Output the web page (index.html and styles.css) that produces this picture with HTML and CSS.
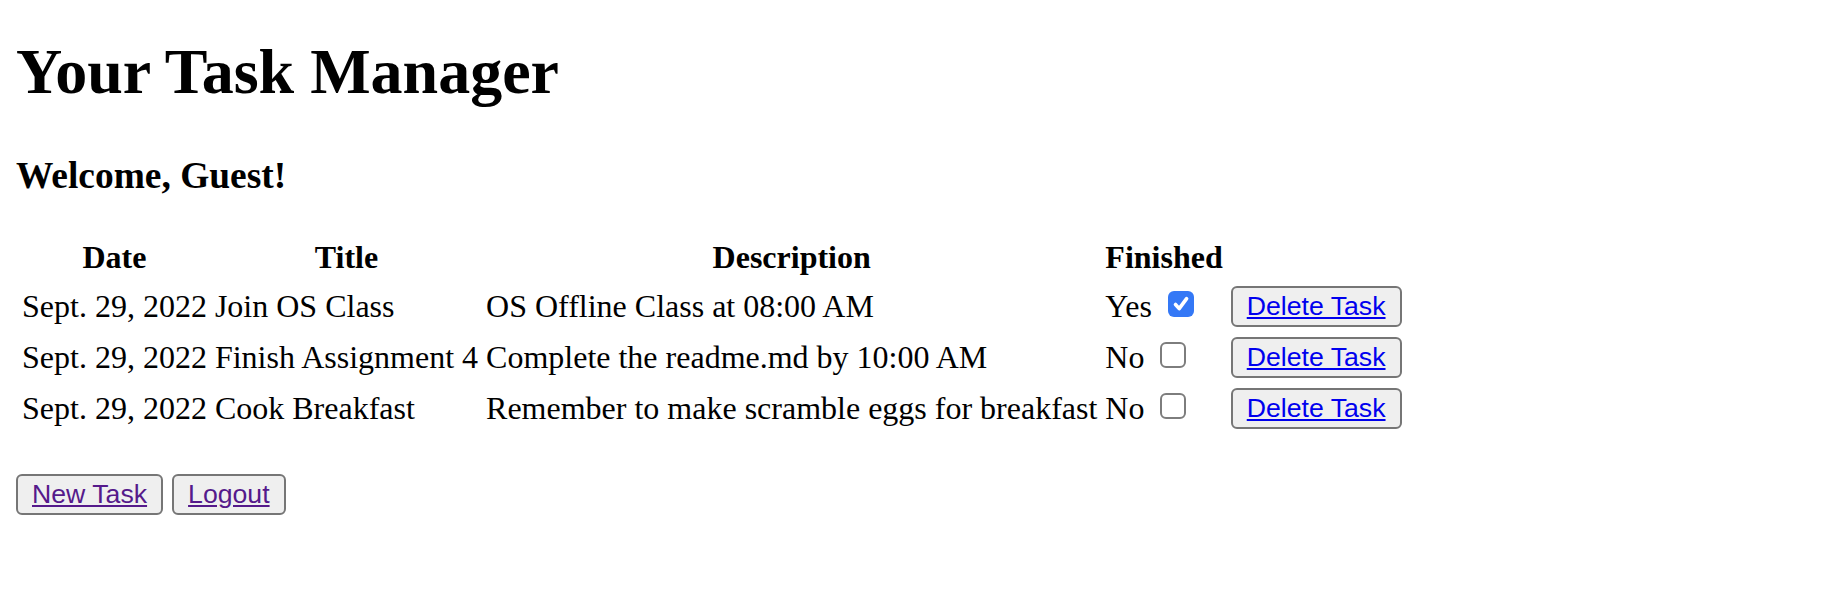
FILE: index.html
```html
<!DOCTYPE html>
<html lang="en">
<head>
<meta charset="utf-8">
<title>Your Task Manager</title>
<link rel="stylesheet" href="styles.css">
</head>
<body class="page">
<h1 class="title">Your Task Manager</h1>
<h3 class="welcome">Welcome, Guest!</h3>
<table class="tasks">
  <thead>
    <tr><th>Date</th><th>Title</th><th>Description</th><th>Finished</th><th></th></tr>
  </thead>
  <tbody>
    <tr>
      <td>Sept. 29, 2022</td>
      <td>Join OS Class</td>
      <td>OS Offline Class at 08:00 AM</td>
      <td>Yes <span class="box is-checked" role="checkbox" aria-checked="true"><svg class="tick" width="26" height="26" viewBox="0 0 26 26"><polyline points="7.5,13.5 11.2,17.6 18.6,7.6" fill="none" stroke="#fff" stroke-width="3.6" stroke-linecap="round" stroke-linejoin="round"/></svg></span></td>
      <td class="action"><button class="btn btn-block"><a class="link" href="#">Delete Task</a></button></td>
    </tr>
    <tr>
      <td>Sept. 29, 2022</td>
      <td>Finish Assignment 4</td>
      <td>Complete the readme.md by 10:00 AM</td>
      <td>No <span class="box" role="checkbox" aria-checked="false"></span></td>
      <td class="action"><button class="btn btn-block"><a class="link" href="#">Delete Task</a></button></td>
    </tr>
    <tr>
      <td>Sept. 29, 2022</td>
      <td>Cook Breakfast</td>
      <td>Remember to make scramble eggs for breakfast</td>
      <td>No <span class="box" role="checkbox" aria-checked="false"></span></td>
      <td class="action"><button class="btn btn-block"><a class="link" href="#">Delete Task</a></button></td>
    </tr>
  </tbody>
</table>
<div class="actions">
  <button class="btn"><a class="link link-visited" href="#">New Task</a></button>
  <button class="btn"><a class="link link-visited" href="#">Logout</a></button>
</div>
</body>
</html>
```

FILE: styles.css
```css
html {
  background: #ffffff;
}

.page {
  margin: 0 16px;
  font-family: "Liberation Serif", "Times New Roman", serif;
  font-size: 32px;
  color: #000000;
}

.title {
  font-size: 64px;
  font-weight: 700;
  line-height: 74px;
  margin: 35px 0 45px;
}

.welcome {
  font-size: 37.44px;
  font-weight: 700;
  line-height: 43px;
  margin: 0 0 34px;
}

.tasks {
  border-collapse: separate;
  border-spacing: 4px;
  margin: 0;
}

.tasks th {
  font-weight: 700;
  font-size: 32px;
  line-height: 40px;
  padding: 2px;
  text-align: center;
  white-space: nowrap;
}

.tasks td {
  font-size: 32px;
  line-height: 43px;
  padding: 2px;
  vertical-align: middle;
  white-space: nowrap;
}

.box {
  display: inline-block;
  box-sizing: border-box;
  width: 26px;
  height: 26px;
  margin-left: 8px;
  border: 2px solid #7d7d7d;
  border-radius: 6px;
  background: #ffffff;
  vertical-align: baseline;
}

.box.is-checked {
  border: none;
  background: #3478f6;
}

.tick {
  display: block;
}

.btn {
  display: inline-block;
  box-sizing: border-box;
  font-family: "Liberation Sans", Arial, sans-serif;
  font-size: 26.67px;
  line-height: 31px;
  padding: 3px 14px;
  border: 2px solid #767676;
  border-radius: 6px;
  background: #efefef;
  color: #000000;
  margin: 0;
}

.btn-block {
  display: block;
}

.link {
  color: #0000ee;
  text-decoration: underline;
}

.link-visited {
  color: #551a8b;
}

.actions {
  display: flex;
  gap: 9px;
  margin-top: 38px;
}
```
